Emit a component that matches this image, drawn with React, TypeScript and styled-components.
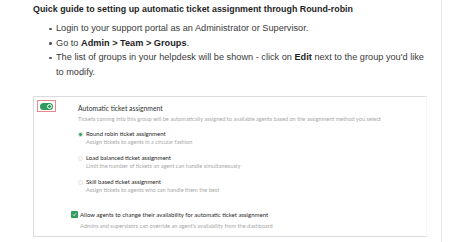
import React from "react";
import styled, { createGlobalStyle } from "styled-components";

const GlobalStyle = createGlobalStyle`
  html, body {
    margin: 0;
    padding: 0;
    background: #ffffff;
  }
`;

const Page = styled.div`
  width: 442px;
  height: 242px;
  border-right: 1px solid #ececec;
  box-sizing: border-box;
  padding: 3px 0 0 33px;
  overflow: hidden;
  font-family: "Liberation Sans", Arial, sans-serif;
`;

const Heading = styled.h3`
  margin: 0;
  font-size: 8.9px;
  line-height: 13px;
  font-weight: 700;
  color: #1f1f1f;
  white-space: nowrap;
`;

const Steps = styled.ul`
  margin: 5px 0 0;
  padding: 0 0 0 23px;
  list-style: none;
  width: 390px;
`;

const Step = styled.li`
  position: relative;
  font-size: 9.2px;
  line-height: 14.6px;
  color: #3a3a3a;

  &::before {
    content: "";
    position: absolute;
    left: -7px;
    top: 6.5px;
    width: 2.5px;
    height: 2.5px;
    border-radius: 50%;
    background: #555;
  }

  b {
    color: #1f1f1f;
  }
`;

const Panel = styled.div`
  margin-top: 17px;
  width: 394px;
  height: 141px;
  box-sizing: border-box;
  border: 1px solid #dcdcdc;
  border-right-color: #f5f5f5;
  display: flex;
  font-family: Lato, "Open Sans", sans-serif;
`;

const ToggleCol = styled.div`
  width: 44px;
  padding: 3px 0 0 3px;
  box-sizing: border-box;
`;

const ToggleFrame = styled.div`
  width: 19px;
  height: 12px;
  box-sizing: border-box;
  border: 1px solid #e58a8a;
  display: flex;
  align-items: center;
  justify-content: center;
`;

const Switch = styled.div`
  width: 13px;
  height: 7px;
  border-radius: 4px;
  background: #2f9b5c;
  position: relative;

  &::after {
    content: "";
    position: absolute;
    right: 1px;
    top: 1px;
    width: 3px;
    height: 3px;
    border-radius: 50%;
    background: #2f9b5c;
    border: 1px solid #ffffff;
  }
`;

const Content = styled.div`
  padding-top: 6px;
  display: flex;
  flex-direction: column;
`;

const Title = styled.div`
  font-size: 6.8px;
  line-height: 10px;
  color: #333;
  white-space: nowrap;
`;

const Desc = styled.div<{ $top?: number; $indent?: number }>`
  font-size: 5.6px;
  line-height: 8px;
  color: #a8a8a8;
  margin-top: ${({ $top }) => $top ?? 0}px;
  margin-left: ${({ $indent }) => $indent ?? 0}px;
  white-space: nowrap;
`;

const Options = styled.div`
  margin-top: 7px;
  display: flex;
  flex-direction: column;
  gap: 8px;
`;

const Option = styled.div`
  display: flex;
  gap: 3px;
`;

const Radio = styled.span<{ $checked?: boolean }>`
  margin-top: 1.5px;
  width: 5px;
  height: 5px;
  border-radius: 50%;
  box-sizing: border-box;
  flex-shrink: 0;
  border: 1px solid ${({ $checked }) => ($checked ? "#cfe9d8" : "#e2e2e2")};
  background: ${({ $checked }) => ($checked ? "#3aa366" : "#ffffff")};
`;

const OptionText = styled.div`
  display: flex;
  flex-direction: column;
`;

const Label = styled.div`
  font-size: 6px;
  line-height: 8px;
  color: #262626;
  white-space: nowrap;
`;

const CheckRow = styled.div`
  margin-top: 16px;
  margin-left: -7px;
  display: flex;
  gap: 2px;
  align-items: center;
`;

const Checkbox = styled.span`
  width: 7px;
  height: 7px;
  border-radius: 1px;
  background: #2f9b5c;
  display: flex;
  align-items: center;
  justify-content: center;
`;

const CheckLabel = styled.div`
  font-size: 6px;
  line-height: 9px;
  color: #2a2a2a;
  white-space: nowrap;
`;

export default function App() {
  return (
    <>
      <GlobalStyle />
      <Page>
        <Heading>Quick guide to setting up automatic ticket assignment through Round-robin</Heading>
        <Steps>
          <Step>Login to your support portal as an Administrator or Supervisor.</Step>
          <Step>
            Go to <b>Admin &gt; Team &gt; Groups</b>.
          </Step>
          <Step>
            The list of groups in your helpdesk will be shown - click on <b>Edit</b> next to the group you'd like
            <br />
            to modify.
          </Step>
        </Steps>
        <Panel>
          <ToggleCol>
            <ToggleFrame>
              <Switch />
            </ToggleFrame>
          </ToggleCol>
          <Content>
            <Title>Automatic ticket assignment</Title>
            <Desc $top={2}>
              Tickets coming into this group will be automatically assigned to available agents based on the
              assignment method you select
            </Desc>
            <Options>
              <Option>
                <Radio $checked />
                <OptionText>
                  <Label>Round robin ticket assignment</Label>
                  <Desc>Assign tickets to agents in a circular fashion</Desc>
                </OptionText>
              </Option>
              <Option>
                <Radio />
                <OptionText>
                  <Label>Load balanced ticket assignment</Label>
                  <Desc>Limit the number of tickets an agent can handle simultaneously</Desc>
                </OptionText>
              </Option>
              <Option>
                <Radio />
                <OptionText>
                  <Label>Skill based ticket assignment</Label>
                  <Desc>Assign tickets to agents who can handle them the best</Desc>
                </OptionText>
              </Option>
            </Options>
            <CheckRow>
              <Checkbox>
                <svg width="5" height="5" viewBox="0 0 10 10">
                  <path d="M2 5.2l2 2 4-4.4" fill="none" stroke="#fff" strokeWidth="1.8" />
                </svg>
              </Checkbox>
              <CheckLabel>Allow agents to change their availability for automatic ticket assignment</CheckLabel>
            </CheckRow>
            <Desc $top={3} $indent={2}>
              Admins and supervisors can override an agent's availability from the dashboard
            </Desc>
          </Content>
        </Panel>
      </Page>
    </>
  );
}
